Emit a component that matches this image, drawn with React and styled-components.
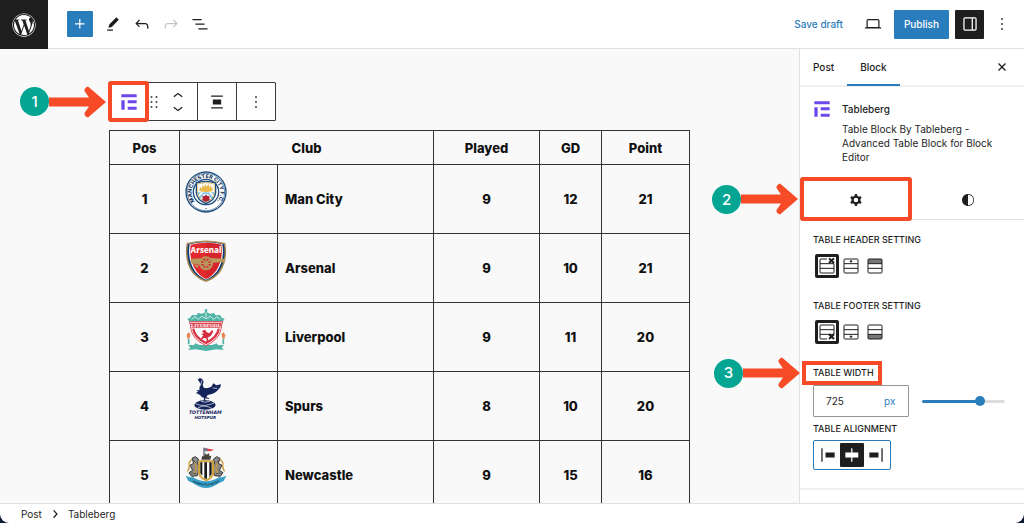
import React, {useState} from 'react';
import styled, {createGlobalStyle} from 'styled-components';
import {FaWordpress} from 'react-icons/fa';

const GlobalStyle = createGlobalStyle`
  * {
    box-sizing: border-box;
  }
  body {
    margin: 0;
    background: #0b1a30;
    color: #1e1e1e;
    font-family: Inter, "Liberation Sans", sans-serif;
    font-size: 10px;
  }
  button, input, select {
    font-family: inherit;
    color: inherit;
  }
  button {
    padding: 0;
    border: none;
    background: none;
    cursor: pointer;
  }
`;

const Shell = styled.div`
  display: flex;
  flex-direction: column;
  height: 100vh;
  overflow: hidden;
  background: #fff;
  border-radius: 0 0 9px 9px;
`;

/* top bar */
const Header = styled.header`
  display: flex;
  align-items: center;
  flex: none;
  height: 49px;
  padding-right: 10px;
  border-bottom: 1px solid #e0e0e0;
`;
const Logo = styled.a`
  display: flex;
  align-items: center;
  justify-content: center;
  align-self: flex-start;
  width: 48px;
  height: 49px;
  background: #1e1e1e;
  color: #fff;
`;
const Tools = styled.div`
  display: flex;
  align-items: center;
  margin-left: 19px;
`;
const Actions = styled.div`
  display: flex;
  align-items: center;
  gap: 6px;
  margin-left: auto;
`;
const IconButton = styled.button`
  display: flex;
  align-items: center;
  justify-content: center;
  width: ${p => p.$width || 29}px;
  height: 29px;
  border-radius: 1px;
  background: ${p => p.$dark ? '#1e1e1e' : 'transparent'};
  color: ${p => p.$dark ? '#fff' : '#1e1e1e'};

  &:disabled {
    color: #c4c4c4;
  }
`;
const AddButton = styled(IconButton)`
  width: 26px;
  height: 26px;
  margin-right: 5px;
  background: #2a7dbd;
  color: #fff;
`;
const TextButton = styled.button`
  height: 29px;
  padding: 0 10px;
  border-radius: 1px;
  font-size: 10px;
  font-weight: 500;
  background: ${p => p.$primary ? '#2a7dbd' : 'transparent'};
  color: ${p => p.$primary ? '#fff' : '#2a7dbd'};
`;

/* canvas */
const Body = styled.div`
  display: flex;
  flex: 1;
  min-height: 0;
`;
const Canvas = styled.main`
  flex: 1;
  min-width: 0;
  padding: 33px 1px 0 0;
  overflow: hidden;
  background: #f9f9f9;
`;
const Block = styled.div`
  width: 580px;
  max-width: 100%;
  margin: 0 auto;
`;
const Toolbar = styled.div`
  display: inline-flex;
  height: 39px;
  border: 1px solid #3a3a3a;
  border-radius: 1px;
  background: #fff;
`;
const ToolbarGroup = styled.div`
  display: flex;
  align-items: center;

  & + & {
    border-left: 1px solid #3a3a3a;
  }
`;
const ToolbarButton = styled.button`
  display: flex;
  align-items: center;
  justify-content: center;
  width: ${p => p.$width || 38}px;
  height: 37px;

  svg {
    flex: none;
  }
`;
const BlockType = styled(ToolbarButton)`
  position: relative;
`;
const Movers = styled.div`
  display: flex;
  flex-direction: column;
  justify-content: center;
  width: 38px;
`;
const Mover = styled.button`
  display: flex;
  align-items: center;
  justify-content: center;
  height: 12px;
  overflow: hidden;
`;

const Table = styled.table`
  width: 100%;
  margin-top: 9px;
  table-layout: fixed;
  border-collapse: collapse;
  font-size: 13px;
  font-weight: 800;
  text-align: center;
  color: #111;
`;
const Col = styled.col`
  width: ${p => p.$width}px;
`;
const Th = styled.th`
  height: 34px;
  padding: 0;
  border: 1px solid #333;
  font-weight: 800;
`;
const Td = styled.td`
  height: 69px;
  padding: ${p => p.$crest ? '6px 5px' : '0 7px'};
  border: 1px solid #333;
  text-align: ${p => p.$left ? 'left' : 'center'};
  vertical-align: ${p => p.$crest ? 'top' : 'middle'};

  svg {
    display: block;
  }
`;

/* sidebar */
const Sidebar = styled.aside`
  position: relative;
  flex: none;
  width: 225px;
  border-left: 1px solid #e0e0e0;
  background: #fff;
`;
const Tabs = styled.div`
  display: flex;
  align-items: center;
  height: 38px;
  padding-right: 8px;
  border-bottom: 2px solid #f0f0f0;
`;
const Tab = styled.button`
  height: 38px;
  padding: 2px 13px 0;
  border-bottom: 2px solid ${p => p.$active ? '#2a7dbd' : 'transparent'};
  font-size: 10px;
  font-weight: 500;
`;
const CloseButton = styled(IconButton)`
  margin-left: auto;
`;
const Card = styled.section`
  display: grid;
  grid-template-columns: 16px 1fr;
  column-gap: 12px;
  padding: 14px 16px 0 14px;
  height: 93px;
`;
const CardTitle = styled.h2`
  margin: 1px 0 6px;
  font-size: 10px;
  line-height: 14px;
  font-weight: 500;
`;
const CardText = styled.p`
  margin: 0;
  font-size: 10px;
  line-height: 14px;
`;
const IconTabs = styled.div`
  display: grid;
  grid-template-columns: 1fr 1fr;
  height: 40px;
  border-bottom: 1px solid #ddd;
`;
const IconTab = styled.button`
  position: relative;
  display: flex;
  align-items: center;
  justify-content: center;
`;
const Settings = styled.div`
  padding: 14px 13px 18px;
  border-bottom: 2px solid #f0f0f0;
`;
const Label = styled.div`
  position: relative;
  width: fit-content;
  font-size: 9px;
  line-height: 12px;
  font-weight: 500;
  text-transform: uppercase;
`;
const Choices = styled.div`
  display: flex;
  margin: 8px 0 22px 2px;
`;
const Choice = styled.button`
  display: flex;
  align-items: center;
  justify-content: center;
  width: 24px;
  height: 24px;
  border: 3px solid ${p => p.$active ? '#1e1e1e' : 'transparent'};
  border-radius: 2px;

  svg {
    flex: none;
  }
`;
const WidthRow = styled.div`
  display: flex;
  align-items: center;
  gap: 13px;
  margin: 6px 0;
`;
const UnitField = styled.div`
  display: flex;
  align-items: center;
  justify-content: space-between;
  width: 96px;
  height: 32px;
  padding: 0 12px;
  border: 1px solid #949494;
  border-radius: 1px;
`;
const NumberInput = styled.input`
  width: 48px;
  padding: 0;
  border: none;
  outline: none;
  background: none;
  font-size: 10px;
`;
const Unit = styled.select`
  appearance: none;
  padding: 0;
  border: none;
  background: none;
  color: #2a7dbd;
  font-size: 10px;
`;
const Range = styled.input`
  appearance: none;
  flex: 1;
  min-width: 0;
  height: 10px;
  margin: 0 6px 0 0;
  background: none;

  &::-webkit-slider-runnable-track {
    height: 3px;
    border-radius: 2px;
    background: linear-gradient(to right, #2a7dbd var(--fill), #ddd var(--fill));
  }

  &::-webkit-slider-thumb {
    appearance: none;
    width: 10px;
    height: 10px;
    margin-top: -4px;
    border-radius: 50%;
    background: #2a7dbd;
  }
`;
const Segmented = styled.div`
  display: flex;
  width: fit-content;
  margin-top: 5px;
  padding: 2px;
  border: 1px solid #2a7dbd;
  border-radius: 2px;
`;
const Segment = styled.button`
  display: flex;
  align-items: center;
  justify-content: center;
  width: 24px;
  height: 24px;
  border-radius: 1px;
  background: ${p => p.$active ? '#1e1e1e' : 'transparent'};
  color: ${p => p.$active ? '#fff' : '#1e1e1e'};
`;

const Footer = styled.footer`
  display: flex;
  align-items: center;
  flex: none;
  gap: 4px;
  height: 20px;
  padding-left: 21px;
  border-top: 1px solid #e0e0e0;
  font-size: 10px;

  a {
    color: inherit;
    text-decoration: none;
  }
`;

/* numbered callouts that sit over the editor */
const Highlight = styled.span`
  position: absolute;
  inset: ${p => p.$inset};
  z-index: 2;
  border: 4px solid #f74a26;
  border-radius: ${p => p.$radius || 0}px;
`;
const CalloutBox = styled.span`
  position: absolute;
  top: 50%;
  right: calc(100% + 6px);
  display: flex;
  align-items: center;
  transform: translateY(-50%);

  svg {
    flex: none;
  }
`;
const Badge = styled.span`
  display: flex;
  align-items: center;
  justify-content: center;
  width: 29px;
  height: 29px;
  border-radius: 50%;
  background: #04a592;
  color: #fff;
  font-size: 15px;
  font-weight: 500;
`;

const Callout = ({number, inset, radius}) => (
    <Highlight $inset={inset} $radius={radius}>
        <CalloutBox>
            <Badge>{number}</Badge>
            <svg width="57" height="32" viewBox="0 0 57 32">
                <path fill="#f74a26" d="M0 11.500H40L35.500 5Q35 2 39 .5L57 16L39 31.500Q35 30 35.500 27L40 20.500H0Z"/>
            </svg>
        </CalloutBox>
    </Highlight>
);

const paths = {
    plus: 'M11 12.500V17.500H12.500V12.500H17.500V11H12.500V6H11V11H6V12.500H11Z',
    edit: 'm19 7-3-3-8.500 8.500-1 4 4-1L19 7Zm-7 11.500H5V20h7v-1.500Z',
    undo: 'M18.300 11.700c-.6-.6-1.400-.9-2.300-.9H6.700l2.900-3.300-1.100-1-4.500 5L8.500 16l1-1-2.700-2.700H16c.5 0 .9.2 1.300.5 1 1 1 3.400 1 4.500v.3h1.500v-.2c0-1.500 0-4.300-1.500-5.700z',
    redo: 'M15.600 6.500l-1.100 1 2.900 3.300H8c-.9 0-1.700.3-2.300.9-1.400 1.500-1.400 4.200-1.400 5.600v.2h1.500v-.3c0-1.100 0-3.500 1-4.500.3-.3.7-.5 1.300-.5h9.200L14.500 15l1.100 1.100 4.600-4.600-4.600-5z',
    list: 'M3 6h11v1.500H3V6Zm3.500 5.500h11V13h-11v-1.500ZM21 17H10v1.500h11V17Z',
    more: 'M13 19h-2v-2h2v2zm0-6h-2v-2h2v2zm0-6h-2V5h2v2z',
    laptop: 'M20.500 16h-.7V8c0-1.100-.9-2-2-2H6.200c-1.100 0-2 .9-2 2v8h-.7c-.8 0-1.500.7-1.500 1.500h20c0-.8-.7-1.500-1.500-1.500zM5.700 8c0-.3.2-.5.5-.5h11.600c.3 0 .5.2.5.5v7.600H5.700V8z',
    drawer: 'M18 4H6c-1.100 0-2 .9-2 2v12c0 1.100.9 2 2 2h12c1.100 0 2-.9 2-2V6c0-1.100-.9-2-2-2zm-4 14.500H6c-.3 0-.5-.2-.5-.5V6c0-.3.2-.5.5-.5h8v13zm4.500-.5c0 .3-.2.5-.5.5h-2.500v-13H18c.3 0 .5.2.5.5v12z',
    close: 'M12 13.060l3.712 3.713 1.061-1.060L13.061 12l3.712-3.712-1.060-1.060L12 10.938 8.288 7.227l-1.061 1.060L10.939 12l-3.712 3.712 1.060 1.061L12 13.061z',
    drag: 'M8 7h2V5H8v2zm0 6h2v-2H8v2zm0 6h2v-2H8v2zm6-14v2h2V5h-2zm0 8h2v-2h-2v2zm0 6h2v-2h-2v2z',
    up: 'M6.500 12.400L12 8l5.500 4.400-.9 1.200L12 10l-4.500 3.600-1-1.200z',
    down: 'M17.500 11.600L12 16l-5.500-4.400.9-1.200L12 14l4.500-3.600 1 1.200z',
    align: 'M7 9v6h10V9H7zM5 19.800h14v-1.500H5v1.500zM5 4.300v1.500h14V4.300H5z',
    cog: 'M10.289 4.836A1 1 0 0111.275 4h1.306a1 1 0 01.987.836l.244 1.466c.787.26 1.503.679 2.108 1.218l1.393-.522a1 1 0 011.216.437l.653 1.130a1 1 0 01-.23 1.273l-1.148.944a6.025 6.025 0 010 2.435l1.149.946a1 1 0 01.23 1.272l-.653 1.130a1 1 0 01-1.216.437l-1.394-.522c-.605.54-1.320.958-2.108 1.218l-.244 1.466a1 1 0 01-.987.836h-1.306a1 1 0 01-.986-.836l-.244-1.466a5.995 5.995 0 01-2.108-1.218l-1.394.522a1 1 0 01-1.217-.436l-.653-1.131a1 1 0 01.23-1.272l1.149-.946a6.026 6.026 0 010-2.435l-1.148-.944a1 1 0 01-.23-1.272l.653-1.131a1 1 0 011.217-.437l1.393.522a5.994 5.994 0 012.108-1.218l.244-1.466zM14.929 12a3 3 0 11-6 0 3 3 0 016 0z',
    styles: 'M12 4c-4.400 0-8 3.600-8 8v.1c0 4.100 3.200 7.500 7.200 7.900h.8c4.400 0 8-3.600 8-8s-3.600-8-8-8zm0 15V5c3.900 0 7 3.100 7 7s-3.100 7-7 7z',
    left: 'M9 9v6h11V9H9zM4 20h1.500V4H4v16z',
    center: 'M12.500 15v5H11v-5H4V9h7V4h1.500v5h7v6h-7Z',
    right: 'M4 15h11V9H4v6zM18.500 4v16H20V4h-1.500z',
};

const Icon = ({name, size = 20}) => (
    <svg width={size} height={size} viewBox="0 0 24 24" fill="currentColor" fillRule="evenodd">
        <path d={paths[name]}/>
    </svg>
);

const TablebergIcon = () => (
    <svg width="16" height="16" viewBox="0 0 48 48" fill="#6f48eb">
        <rect x="1" y="1" width="46" height="9" rx="1"/>
        <rect x="1" y="19" width="10" height="28" rx="1"/>
        <rect x="20" y="19" width="27" height="9" rx="1"/>
        <rect x="20" y="38" width="27" height="9" rx="1"/>
    </svg>
);

// kind: none | add | filled
const RowIcon = ({kind, bottom}) => {
    const y = bottom ? 38 : 8;
    return (
        <svg width="16" height="16" viewBox="0 0 48 48" fill="none" stroke="#1e1e1e" strokeWidth="3">
            {kind === 'filled' && <rect x="3" y={bottom ? 31 : 3} width="42" height="14" fill="#777" stroke="none"/>}
            {kind === 'none'
                ? <path d={bottom
                    ? 'M24 45H5Q3 45 3 43V5Q3 3 5 3H43Q45 3 45 5V31H3M3 17H45'
                    : 'M24 3H5Q3 3 3 5V43Q3 45 5 45H43Q45 45 45 43V17H3M3 31H45'}/>
                : <>
                    <rect x="3" y="3" width="42" height="42" rx="3"/>
                    <path d="M3 17H45M3 31H45"/>
                </>}
            {kind === 'none' && <path strokeWidth="6" d={`M30 ${y - 7}L45 ${y + 7}M45 ${y - 7}L30 ${y + 7}`}/>}
            {kind === 'add' && <path strokeWidth="3" d={bottom ? 'M24 34V42M20 38H28' : 'M24 6V14M20 10H28'}/>}
        </svg>
    );
};

const ManCity = () => (
    <svg width="42" height="42" viewBox="0 0 126 126">
        <circle cx="63" cy="63" r="62" fill="#1f4d7d"/>
        <circle cx="63" cy="63" r="58" fill="#fff"/>
        <circle cx="63" cy="63" r="56" fill="none" stroke="#2b5b8c" strokeWidth="2"/>
        <circle cx="63" cy="63" r="38" fill="#fff" stroke="#1f4d7d" strokeWidth="4"/>
        <defs>
            <path id="cityRing" d="M33 95A43 43 0 1 1 93 95"/>
            <clipPath id="cityShield"><path d="M34 36Q63 27 92 36V66Q90 87 63 98Q36 87 34 66Z"/></clipPath>
        </defs>
        <text fill="#173a63" fontFamily="Inter" fontSize="16" fontWeight="800">
            <textPath href="#cityRing" startOffset="50%" textAnchor="middle">MANCHESTER CITY F.C.</textPath>
        </text>
        <g clipPath="url(#cityShield)">
            <path fill="#fff" d="M30 25H96V64H30Z"/>
            <path fill="#8ec4e8" d="M30 64H96V100H30Z"/>
            <path stroke="#fff" strokeWidth="5" d="M34 82L52 64M42 94L60 70M92 82L74 64M84 94L66 70"/>
        </g>
        <path fill="#e9b949" d="M43 60L45 47L51 53L52 41L58 49L60 38L65 47L71 38L73 49L79 42L79 53L84 48L82 60Q63 66 43 60Z"/>
        <path fill="none" stroke="#1f4d7d" strokeWidth="4" d="M34 36Q63 27 92 36V66Q90 87 63 98Q36 87 34 66Z"/>
        <path fill="none" stroke="#d9ab42" strokeWidth="2" d="M38 39Q63 31 88 39V66Q86 84 63 94Q40 84 38 66Z"/>
        <path fill="#b3202f" d="M63 72L68 75L74 76L73 82L74 88L67 90L63 93L58 90L52 88L53 82L52 76L58 75Z"/>
        <circle cx="63" cy="113" r="2" fill="#1f4d7d"/>
    </svg>
);

const Arsenal = () => (
    <svg width="42" height="42" viewBox="0 0 126 126">
        <path fill="#a58a55" d="M5 9Q63-6 121 9Q130 63 104 99Q86 119 63 126Q40 119 22 99Q-4 63 5 9Z"/>
        <path fill="#123b75" d="M9 13Q63-1 117 13Q125 62 100 96Q84 115 63 121Q42 115 26 96Q1 62 9 13Z"/>
        <path fill="#fff" d="M14 13Q63 0 112 13Q119 60 96 94Q82 112 63 119Q44 112 30 94Q7 60 14 13Z"/>
        <path fill="#e2292d" d="M17 14Q63 2 109 14Q115 60 93 92Q79 110 63 117Q47 110 33 92Q11 60 17 14Z"/>
        <path fill="#c8202b" d="M63 7Q88 8 109 14Q115 60 93 92Q79 110 63 117Z" opacity=".5"/>
        <text x="63" y="40" textAnchor="middle" fill="#fff" fontFamily="Noto Sans" fontSize="24" fontWeight="800">Arsenal</text>
        <path fill="#b79a5c" d="M15 63L20 56L70 54L118 56V67L80 68L42 74L20 70Z"/>
        <path fill="#b79a5c" d="M24 71L42 77L36 84Z"/>
        <circle cx="63" cy="70" r="18" fill="#c8343a" stroke="#b79a5c" strokeWidth="6"/>
        <path stroke="#b79a5c" strokeWidth="4" d="M63 54V86M47 70H79M52 59L74 81M74 59L52 81"/>
        <circle cx="63" cy="70" r="5" fill="#b79a5c"/>
    </svg>
);

const Liverpool = () => (
    <svg width="42" height="42" viewBox="0 0 126 126">
        <g fill="#4fb3a6">
            <path d="M59 1H67L66 10L75 14L88 12L91 19L105 18L111 27L119 29L113 38H13L7 29L15 27L21 18L35 19L38 12L51 14L60 10Z"/>
            <path d="M31 103L44 108H82L95 103L99 109L117 107L110 116L117 123L94 121L63 126L32 121L9 123L16 116L9 107L27 109Z"/>
        </g>
        <path fill="none" stroke="#d3efeb" strokeWidth="3" d="M20 31L30 23L40 31L50 22L63 29L76 22L86 31L96 23L106 31M63 10V25"/>
        <path fill="#fff" stroke="#dd4a59" strokeWidth="3" d="M13 38H113Q109 46 108 61Q103 91 63 110Q23 91 18 61Q17 46 13 38Z"/>
        <path fill="#dc4452" d="M16 41H110L106 56H20Z"/>
        <text x="63" y="54" textAnchor="middle" fill="#fff" fontFamily="Liberation Serif" fontSize="15" fontWeight="700">LIVERPOOL</text>
        <path fill="none" stroke="#d83445" strokeWidth="7" d="M25 59Q27 84 63 102Q99 84 101 59"/>
        <path fill="#d62c40" d="M50 66L61 62L64 69L73 73L81 63L85 67L78 80L68 86L70 95L64 98L65 89L57 86L52 91L48 88L55 79L48 75L57 73Z"/>
        <path fill="#e8814b" d="M10 70L16 74L14 88L8 90L5 78ZM116 70L110 74L112 88L118 90L121 78Z"/>
        <path stroke="#4fb3a6" strokeWidth="5" d="M11 90V105M115 90V105"/>
    </svg>
);

const Spurs = () => (
    <svg width="42" height="42" viewBox="0 0 126 126" fill="#14235a">
        <path d="M38 5L45 0L52 4L56 11L53 20L56 29Q67 33 79 26L85 16L94 22L108 19L106 28L99 36Q94 43 83 47L68 51L64 58L72 60V63L60 61L62 70H56L57 59L51 58L45 51L32 44L40 42L34 37L43 37L44 26L47 18L42 10Z"/>
        <path fill="none" stroke="#f9f9f9" strokeWidth="2" d="M51 7L46 24M83 30L97 31"/>
        <ellipse cx="60" cy="81" rx="32" ry="14"/>
        <path fill="none" stroke="#f9f9f9" strokeWidth="2" d="M31 77Q58 89 89 74M39 89Q60 79 80 91M48 70Q59 75 75 70"/>
        <g textAnchor="middle" fontFamily="DejaVu Sans" fontWeight="700" fontStyle="italic">
            <text x="61" y="108" fontSize="14">TOTTENHAM</text>
            <text x="61" y="124" fontSize="12">HOTSPUR</text>
        </g>
    </svg>
);

const Newcastle = () => (
    <svg width="42" height="42" viewBox="0 0 126 126">
        <path fill="#8b8a88" stroke="#333" strokeWidth="3" d="M21 34L31 29L41 37L37 48L44 61L37 86L20 88L12 77L23 70L15 55L26 49ZM105 34L95 29L85 37L89 48L82 61L89 86L106 88L114 77L103 70L111 55L100 49Z"/>
        <path fill="none" stroke="#c99a3b" strokeWidth="4" d="M7 73Q15 64 12 48L20 37M119 73Q111 64 114 48L106 37M29 48L34 65L27 80M97 48L92 65L99 80"/>
        <path fill="#ddd" stroke="#444" strokeWidth="2" d="M26 42L31 45M96 45L101 42M18 78L33 80M93 80L108 78"/>
        <path fill="#4a4438" d="M49 38L52 26L58 29L60 19L66 23L71 18L74 28L79 26L76 38Z"/>
        <path stroke="#333" strokeWidth="3" d="M57 2V34"/>
        <path fill="#db4446" d="M58 3L88 8L76 13L58 12Z"/>
        <path fill="#5a7a9e" d="M58 3L67 5V13L58 12Z"/>
        <path fill="#d1a33c" d="M43 40H84L87 45L88 79Q84 96 64 103Q43 96 39 79L40 45Z"/>
        <path fill="#fff" d="M46 46H81V79Q79 91 64 97Q48 91 46 79Z"/>
        <path fill="#191919" d="M46 46H52V86L46 79ZM58 46H66V96L58 94ZM73 46H80V81L73 91Z"/>
        <path fill="#379fc5" d="M2 86L14 91L24 91Q63 115 102 91L112 91L124 86L116 102L101 109Q63 137 25 109L10 102Z"/>
        <defs><path id="magpieBand" d="M20 104Q63 128 107 103"/></defs>
        <text fill="#173e59" fontFamily="Inter" fontSize="8" fontWeight="800">
            <textPath href="#magpieBand" startOffset="50%" textAnchor="middle">NEWCASTLE UNITED</textPath>
        </text>
    </svg>
);

const clubs = [
    {name: 'Man City', Crest: ManCity, played: 9, gd: 12, point: 21},
    {name: 'Arsenal', Crest: Arsenal, played: 9, gd: 10, point: 21},
    {name: 'Liverpool', Crest: Liverpool, played: 9, gd: 11, point: 20},
    {name: 'Spurs', Crest: Spurs, played: 8, gd: 10, point: 20},
    {name: 'Newcastle', Crest: Newcastle, played: 9, gd: 15, point: 16},
];
const kinds = ['none', 'add', 'filled'];

const App = () => {
    const [header, setHeader] = useState('none')
    const [footer, setFooter] = useState('none')
    const [width, setWidth] = useState(725)
    const [align, setAlign] = useState('center')

    const handleWidth = (e) => {
        setWidth(Number(e.target.value))
    }

    return (
        <Shell>
            <GlobalStyle/>
            <Header>
                <Logo href="#" aria-label="WordPress"><FaWordpress size={24}/></Logo>
                <Tools>
                    <AddButton aria-label="Add block"><Icon name="plus"/></AddButton>
                    <IconButton aria-label="Edit"><Icon name="edit"/></IconButton>
                    <IconButton aria-label="Undo"><Icon name="undo"/></IconButton>
                    <IconButton aria-label="Redo" disabled><Icon name="redo"/></IconButton>
                    <IconButton aria-label="List view"><Icon name="list"/></IconButton>
                </Tools>
                <Actions>
                    <TextButton>Save draft</TextButton>
                    <IconButton aria-label="View"><Icon name="laptop"/></IconButton>
                    <TextButton $primary>Publish</TextButton>
                    <IconButton $dark aria-label="Settings"><Icon name="drawer"/></IconButton>
                    <IconButton $width={24} aria-label="Options"><Icon name="more"/></IconButton>
                </Actions>
            </Header>
            <Body>
                <Canvas>
                    <Block>
                        <Toolbar>
                            <ToolbarGroup>
                                <BlockType aria-label="Tableberg">
                                    <TablebergIcon/>
                                    <Callout number={1} inset="-2px -1px -2px -2px" radius={3}/>
                                </BlockType>
                                <ToolbarButton $width={11} aria-label="Drag"><Icon name="drag"/></ToolbarButton>
                                <Movers>
                                    <Mover aria-label="Move up"><Icon name="up"/></Mover>
                                    <Mover aria-label="Move down"><Icon name="down"/></Mover>
                                </Movers>
                            </ToolbarGroup>
                            <ToolbarGroup>
                                <ToolbarButton aria-label="Align"><Icon name="align"/></ToolbarButton>
                            </ToolbarGroup>
                            <ToolbarGroup>
                                <ToolbarButton aria-label="Options"><Icon name="more"/></ToolbarButton>
                            </ToolbarGroup>
                        </Toolbar>
                        <Table>
                            <colgroup>
                                {[70, 98, 156, 106, 62, 88].map((w, i) => <Col key={i} $width={w}/>)}
                            </colgroup>
                            <thead>
                                <tr>
                                    <Th>Pos</Th>
                                    <Th colSpan={2}>Club</Th>
                                    <Th>Played</Th>
                                    <Th>GD</Th>
                                    <Th>Point</Th>
                                </tr>
                            </thead>
                            <tbody>
                                {clubs.map(({name, Crest, played, gd, point}, i) => (
                                    <tr key={name}>
                                        <Td>{i + 1}</Td>
                                        <Td $crest><Crest/></Td>
                                        <Td $left>{name}</Td>
                                        <Td>{played}</Td>
                                        <Td>{gd}</Td>
                                        <Td>{point}</Td>
                                    </tr>
                                ))}
                            </tbody>
                        </Table>
                    </Block>
                </Canvas>
                <Sidebar>
                    <Tabs>
                        <Tab>Post</Tab>
                        <Tab $active>Block</Tab>
                        <CloseButton aria-label="Close"><Icon name="close"/></CloseButton>
                    </Tabs>
                    <Card>
                        <TablebergIcon/>
                        <div>
                            <CardTitle>Tableberg</CardTitle>
                            <CardText>Table Block By Tableberg - Advanced Table Block for Block Editor</CardText>
                        </div>
                    </Card>
                    <IconTabs>
                        <IconTab aria-label="Settings">
                            <Icon name="cog" size={18}/>
                            <Callout number={2} inset="-3px 0 -2px 0" radius={3}/>
                        </IconTab>
                        <IconTab aria-label="Styles"><Icon name="styles" size={18}/></IconTab>
                    </IconTabs>
                    <Settings>
                        <Label>Table header setting</Label>
                        <Choices>
                            {kinds.map(kind => (
                                <Choice key={kind} $active={header === kind} aria-label={`Header ${kind}`}
                                        onClick={() => setHeader(kind)}>
                                    <RowIcon kind={kind}/>
                                </Choice>
                            ))}
                        </Choices>
                        <Label>Table footer setting</Label>
                        <Choices>
                            {kinds.map(kind => (
                                <Choice key={kind} $active={footer === kind} aria-label={`Footer ${kind}`}
                                        onClick={() => setFooter(kind)}>
                                    <RowIcon kind={kind} bottom/>
                                </Choice>
                            ))}
                        </Choices>
                        <Label as="label" htmlFor="table-width">
                            Table width
                            <Callout number={3} inset="-6px -8px -7px -11px"/>
                        </Label>
                        <WidthRow>
                            <UnitField>
                                <NumberInput id="table-width" type="text" value={width} onChange={handleWidth}/>
                                <Unit aria-label="Unit" defaultValue="px">
                                    <option>px</option>
                                    <option>%</option>
                                </Unit>
                            </UnitField>
                            <Range type="range" aria-label="Table width" min="0" max="1000" value={width}
                                   onChange={handleWidth} style={{'--fill': `${width / 10}%`}}/>
                        </WidthRow>
                        <Label>Table alignment</Label>
                        <Segmented>
                            {['left', 'center', 'right'].map(side => (
                                <Segment key={side} $active={align === side} aria-label={`Align ${side}`}
                                         onClick={() => setAlign(side)}>
                                    <Icon name={side}/>
                                </Segment>
                            ))}
                        </Segmented>
                    </Settings>
                </Sidebar>
            </Body>
            <Footer>
                <a href="#">Post</a>
                <svg width="18" height="18" viewBox="0 0 24 24" fill="#1e1e1e">
                    <path d="M10.800 6.500L9.500 7.700L13.400 12L9.500 16.300L10.800 17.500L15.700 12Z"/>
                </svg>
                <a href="#">Tableberg</a>
            </Footer>
        </Shell>
    );
};

export default App;
